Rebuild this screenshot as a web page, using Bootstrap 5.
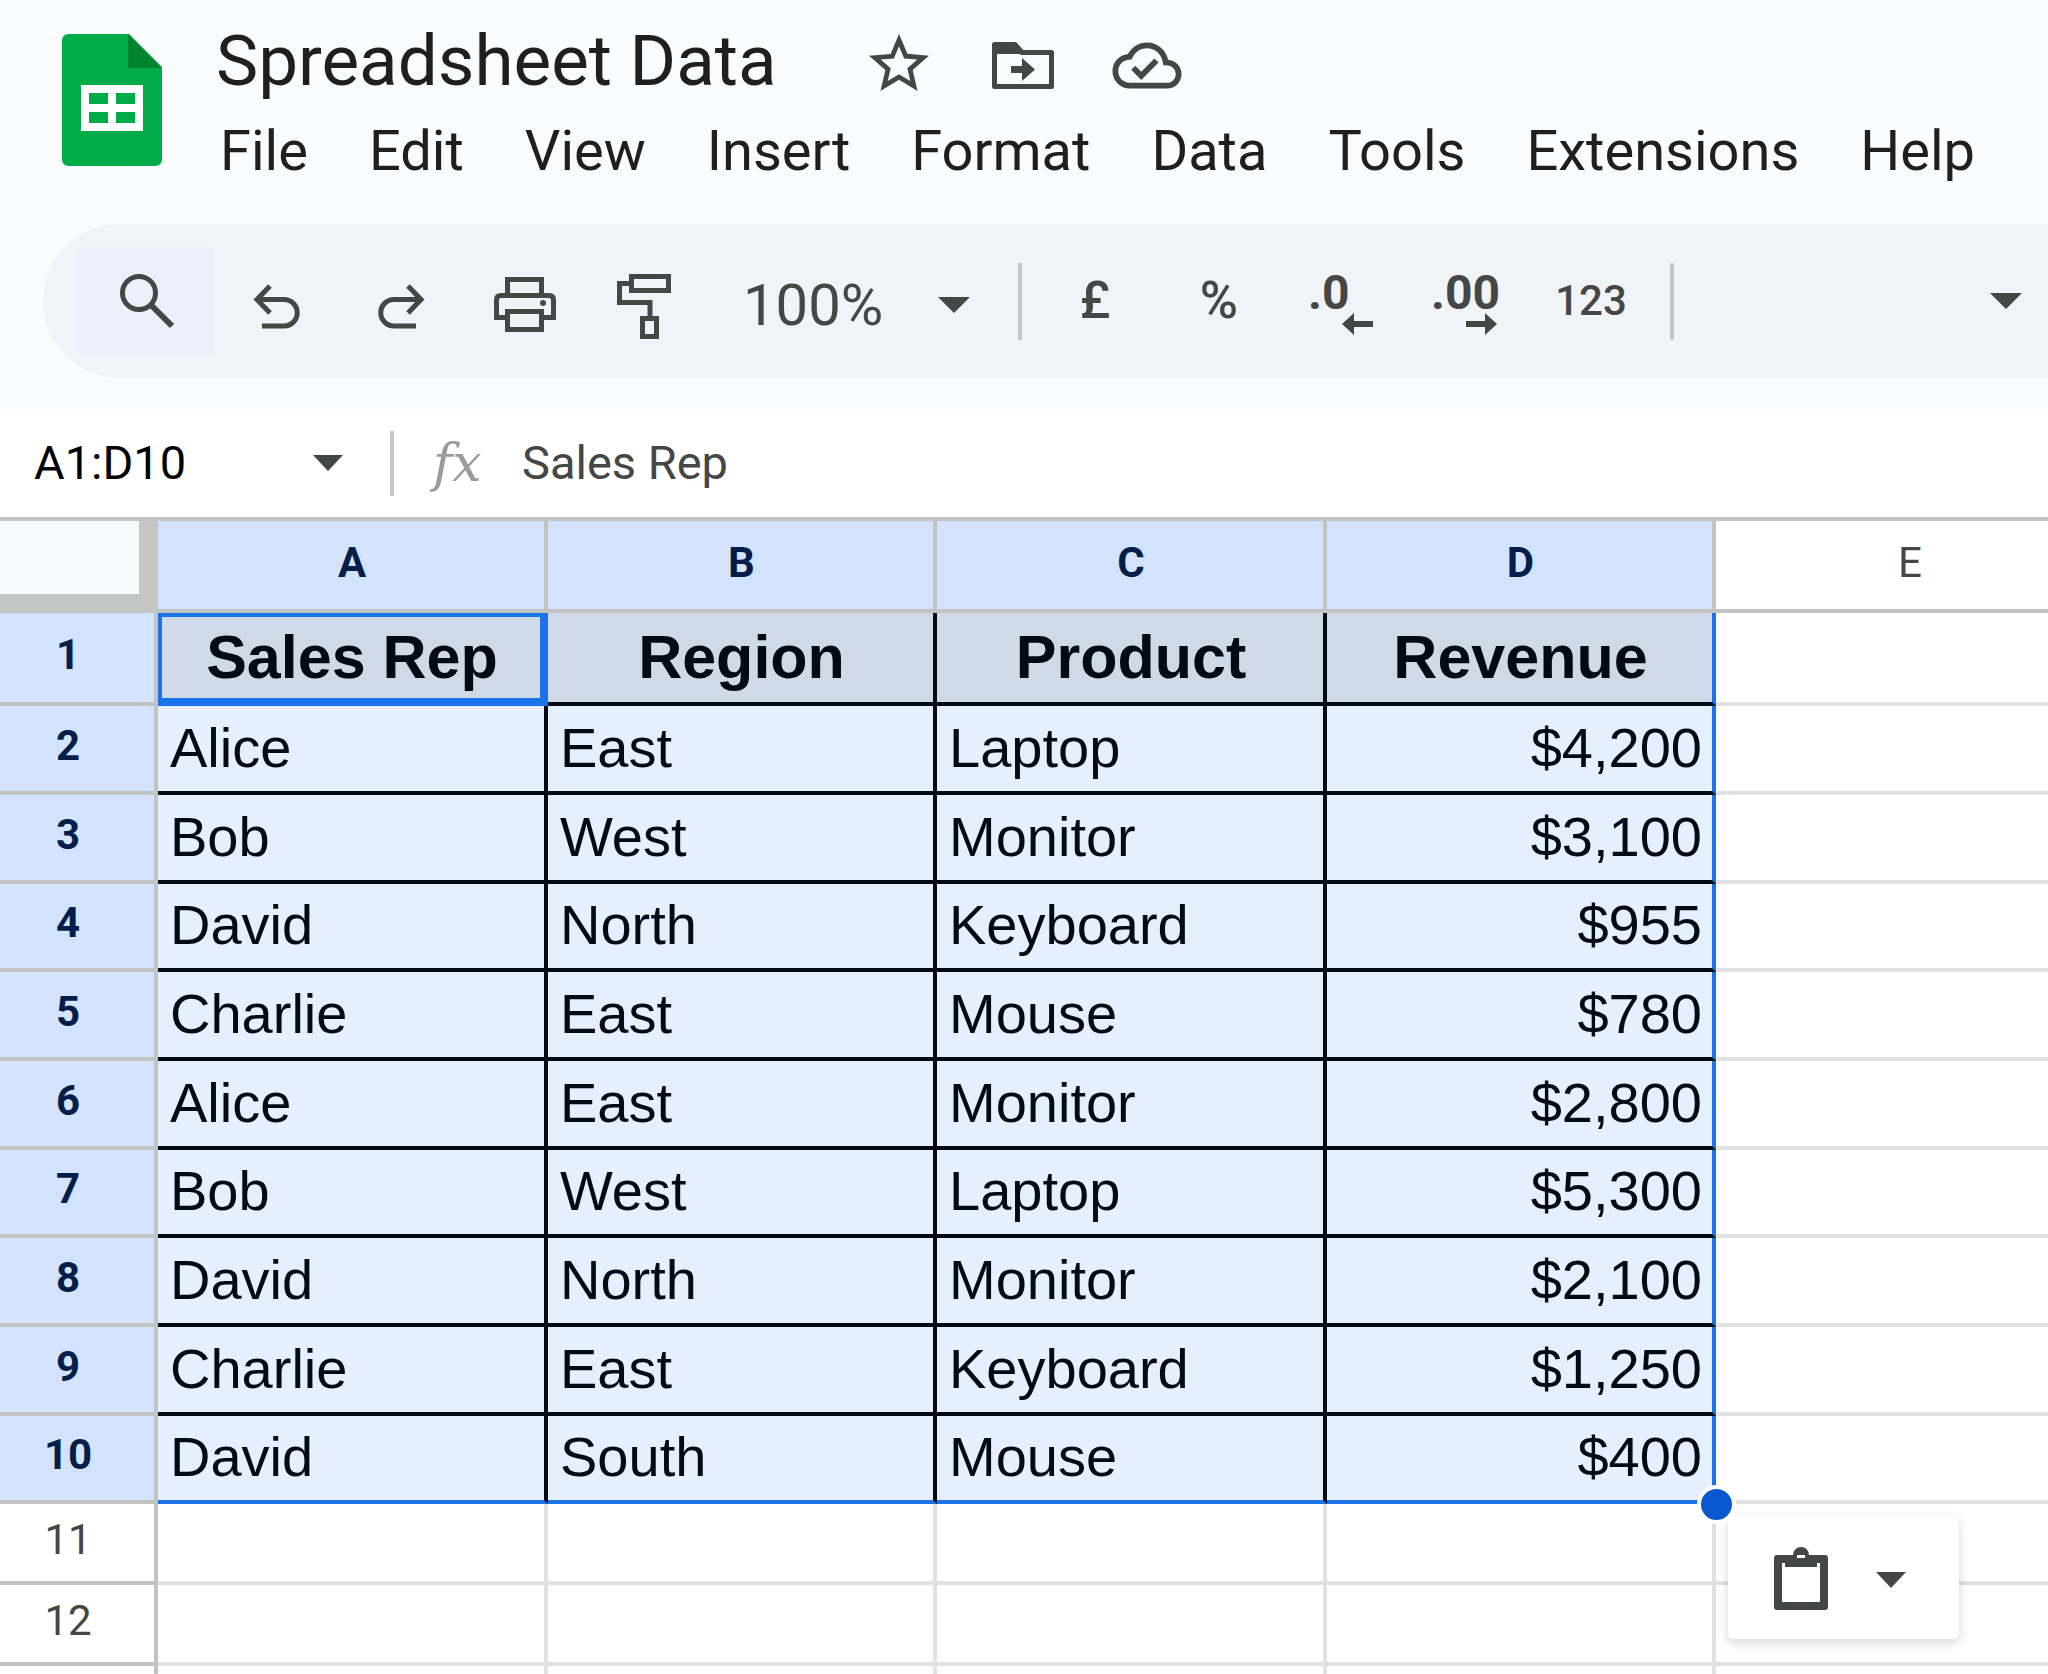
<!DOCTYPE html>
<html lang="en">
<head>
<meta charset="utf-8">
<meta name="viewport" content="width=device-width, initial-scale=1">
<title>Spreadsheet Data</title>
<link href="https://cdn.jsdelivr.net/npm/bootstrap@5.3.0/dist/css/bootstrap.min.css" rel="stylesheet">
<style>
  :root { --ink: #444746; --line: #c2c4c3; --grid: #e1e1e1; --pick: #1a73e8; --dark: #020a18; }
  body { background: #fafbfd; color: #1f1f1f; font-family: Roboto, "Liberation Sans", sans-serif; }
  svg { display: block; flex: none; }
  .ink-fill { fill: var(--ink); }
  .ink-line { fill: none; stroke: var(--ink); stroke-width: 5; }

  .app-head { padding: 21px 0 38px 62px; }
  .app-logo { margin: 13px 54px 0 0; }
  .doc-title { font-size: 71px; line-height: 80px; font-weight: 400; margin: 0 60px 0 0; }
  .icon-btn { width: 124px; padding: 0; border: 0; background: none; color: var(--ink); line-height: 1; display: flex; align-items: center; justify-content: center; flex: none; }
  .menu-row { margin: 15px 0 0 4px; gap: 61px; }
  .menu-row a { font-size: 56px; line-height: 70px; color: #1f1f1f; padding: 0; }

  .tool-strip { height: 154px; margin: 0 0 31px 43px; padding-left: 33px; background: #f0f3f8; border-radius: 77px 0 0 77px; color: var(--ink); }
  .search-btn { width: 139px; height: 108px; background: #edf0fa; border-radius: 8px; }
  .bare { appearance: none; border: 0; background: none; padding: 0; outline: 0; color: inherit; }
  .zoom-box { padding-left: 32px; margin-right: 48px; }
  .zoom-pick { width: 195px; font-size: 58px; line-height: 64px; }
  .rule-v { width: 4px; height: 77px; background: #c7c7c7; flex: none; }
  .fmt-group { margin: 0 17px 0 11px; }
  .t-sym { font-size: 52px; font-weight: 500; }
  .t-num { font-size: 42px; font-weight: 500; }
  .font-pick { padding-right: 26px; }

  .fx-bar { height: 108px; background: #fff; }
  .name-box { width: 278px; margin-left: 34px; font-size: 47px; color: #000; }
  .fx-rule { height: 65px; margin: 0 39px 0 46px; }
  .fx-mark { width: 89px; font: italic 64px/64px "DejaVu Serif", serif; font-size: 52px; color: #9b9b9b; }
  .fx-input { font-size: 47px; color: var(--ink); }

  .sheet-wrap { background: #fff; border-top: 4px solid var(--line); min-height: 0; }
  .sheet { table-layout: fixed; width: 2106px; border-collapse: separate; border-spacing: 0; font-family: "Liberation Sans", Arial, sans-serif; }
  .c-head { width: 158px; }
  .c-odd { width: 390px; }
  .c-even { width: 389px; }
  .sheet th, .sheet td { height: 89px; padding: 0 10px 2px 12px; vertical-align: middle; line-height: 64px; font-size: 56px; color: var(--dark); border: 0 solid var(--grid); border-width: 0 4px 4px 0; white-space: nowrap; }
  .sheet thead th { height: 92px; padding-bottom: 4px; text-align: center; }
  .sheet thead th, .sheet tbody th { font-family: Roboto, sans-serif; font-size: 42px; line-height: 44px; font-weight: 400; color: var(--ink); border-color: var(--line); }
  .sheet tbody th { padding: 0 18px 6px 0; text-align: center; }
  .sheet thead th.corner { background: #f8f9fa; border-width: 0 19px 19px 0; border-color: #c3c6c4; }
  .sheet th.on { background: #d3e3fd; color: #041e49; font-weight: 700; }
  .sheet .sel td:not(:last-child) { background: #e6effd; border-color: var(--dark); }
  .sheet .sel td:nth-child(5) { border-right-color: var(--pick); text-align: right; }
  .sheet .sel-head td:not(:last-child) { background: #d0d9e7; font-size: 61px; font-weight: 700; text-align: center; }
  .sheet .sel-head td { height: 93px; }
  .sheet .sel-head td:nth-child(2) { border-color: var(--pick); box-shadow: inset 0 0 0 4px var(--pick); }
  .sheet .sel:nth-child(3n+1):not(.sel-head) > * { height: 88px; }
  .sheet .sel-last td:not(:last-child) { border-bottom-color: var(--pick); }
  .sheet .free > * { height: 81px; }
  .grip { position: absolute; right: -24px; bottom: -24px; width: 39px; height: 39px; border: 4px solid #fff; border-radius: 50%; background: #0b57d0; }
  .paste-btn { position: absolute; right: -247px; top: calc(100% + 16px); width: 231px; height: 123px; padding: 0 52px 0 44px; background: #fff; border: 0; border-radius: 6px; box-shadow: 0 4px 10px 1px rgba(60, 64, 67, .18); }
</style>
<script src="https://cdn.jsdelivr.net/npm/bootstrap@5.3.0/dist/js/bootstrap.bundle.min.js"></script>
</head>
<body class="d-flex flex-column vh-100 overflow-hidden">

<header class="app-head d-flex align-items-start">
  <svg class="app-logo" width="100" height="132" viewBox="0 0 100 132" role="img" aria-label="Sheets">
    <path d="M7 0H67L100 33V125q0 7-7 7H7q-7 0-7-7V7Q0 0 7 0z" fill="#00ac47"/>
    <path d="M66 0L100 34H66z" fill="#00832d"/>
    <path d="M19 51H81V97H19zM27 59V70H46V59zM54 59V70H73V59zM27 78V89H46V78zM54 78V89H73V78z" fill="#fff" fill-rule="evenodd"/>
  </svg>
  <div>
    <div class="d-flex align-items-center">
      <h1 class="doc-title">Spreadsheet Data</h1>
      <button class="icon-btn" type="button" aria-label="Star">
        <svg width="72" height="72" viewBox="0 0 72 72"><path class="ink-fill" transform="translate(0 3) scale(3)" d="M22 9.24l-7.19-.62L12 2 9.19 8.63 2 9.24l5.46 4.73L5.82 21 12 17.27 18.18 21l-1.63-7.03L22 9.24zM12 15.4l-3.76 2.27 1-4.28-3.32-2.88 4.38-.38L12 6.1l1.71 4.04 4.38.38-3.32 2.88 1 4.28L12 15.4z"/></svg>
      </button>
      <button class="icon-btn" type="button" aria-label="Move">
        <svg width="72" height="72" viewBox="0 0 72 72"><path class="ink-line" stroke-linejoin="round" d="M7.5 27.500V19.500H28l7 8H64.500V61.500H7.500z"/><path class="ink-fill" d="M7 19H28l7 10H7zM24 41H35V33L48 44.500 35 56V48H24z"/></svg>
      </button>
      <button class="icon-btn" type="button" aria-label="Saved to Drive">
        <svg width="72" height="72" viewBox="0 0 72 72"><path class="ink-fill" transform="translate(1.500 6) scale(2.875)" d="M19.350 10.040C18.670 6.590 15.640 4 12 4 9.110 4 6.600 5.640 5.350 8.040 2.340 8.360 0 10.910 0 14c0 3.310 2.690 6 6 6h13c2.760 0 5-2.240 5-5 0-2.640-2.050-4.780-4.650-4.960zM19 18H6c-2.210 0-4-1.790-4-4 0-2.050 1.530-3.760 3.560-3.970l1.070-.11.5-.95C8.080 7.140 9.940 6 12 6c2.620 0 4.880 1.860 5.390 4.430l.3 1.500 1.530.11c1.560.1 2.780 1.410 2.780 2.960 0 1.650-1.350 3-3 3zm-9-3.820l-2.090-2.090L6.500 13.500 10 17l6.010-6.010-1.410-1.410z"/></svg>
      </button>
    </div>
    <nav class="menu-row nav flex-nowrap" aria-label="Menu">
      <a class="nav-link" href="#">File</a>
      <a class="nav-link" href="#">Edit</a>
      <a class="nav-link" href="#">View</a>
      <a class="nav-link" href="#">Insert</a>
      <a class="nav-link" href="#">Format</a>
      <a class="nav-link" href="#">Data</a>
      <a class="nav-link" href="#">Tools</a>
      <a class="nav-link" href="#">Extensions</a>
      <a class="nav-link" href="#">Help</a>
    </nav>
  </div>
</header>

<div class="tool-strip d-flex align-items-center flex-shrink-0" role="toolbar" aria-label="Toolbar">
  <button class="icon-btn search-btn" type="button" aria-label="Search the menus">
    <svg width="72" height="80" viewBox="0 0 72 80"><g class="ink-line"><circle cx="29" cy="32" r="16.500"/><path d="M41 44L62 65" stroke-width="6"/></g></svg>
  </button>
  <button class="icon-btn" type="button" aria-label="Undo">
    <svg width="72" height="80" viewBox="0 0 72 80"><path class="ink-line" d="M29 25L16 38.500 29 52M16 38.500H43a13.200 13.200 0 0 1 0 26.500H21"/></svg>
  </button>
  <button class="icon-btn" type="button" aria-label="Redo">
    <svg width="72" height="80" viewBox="0 0 72 80"><path class="ink-line" d="M43 25L56 38.500 43 52M56 38.500H29a13.200 13.200 0 0 0 0 26.500H51"/></svg>
  </button>
  <button class="icon-btn" type="button" aria-label="Print">
    <svg width="72" height="80" viewBox="0 0 72 80"><path class="ink-line" d="M18.500 34V18.500H52.500V34M18 56.500H7.500V39q0-4.500 4.500-4.500H60q4.500 0 4.500 4.500V56.500H53M18.500 50.500H52.500V68.500H18.500z"/><circle class="ink-fill" cx="54" cy="42" r="3"/></svg>
  </button>
  <button class="icon-btn" type="button" aria-label="Paint format">
    <svg width="72" height="80" viewBox="0 0 72 80"><path class="ink-line" d="M18.500 15.500H55.500V29.500H18.500zM18 22.500H6.500V41.500H37V56M29.500 57.500H43.500V75.500H29.500z"/></svg>
  </button>
  <div class="zoom-box d-flex align-items-center pt-2">
    <select class="bare zoom-pick" aria-label="Zoom"><option>100%</option></select>
    <svg width="32" height="16" viewBox="0 0 32 16"><path class="ink-fill" d="M0 0H32L16 16z"/></svg>
  </div>
  <span class="rule-v"></span>
  <div class="fmt-group d-flex align-items-center">
    <button class="icon-btn t-sym" type="button" aria-label="Format as currency">£</button>
    <button class="icon-btn t-sym" type="button" aria-label="Format as percent">%</button>
    <button class="icon-btn" type="button" aria-label="Decrease decimal places">
      <svg width="72" height="80" viewBox="0 0 72 80"><text class="ink-fill" x="1" y="48" font-size="48" font-weight="700">.0</text><path class="ink-fill" d="M35 63L47 52V60H66V66H47V74z"/></svg>
    </button>
    <button class="icon-btn" type="button" aria-label="Increase decimal places">
      <svg width="72" height="80" viewBox="0 0 72 80"><text class="ink-fill" x="0" y="48" font-size="48" font-weight="700">.00</text><path class="ink-fill" d="M66 63L54 52V60H35V66H54V74z"/></svg>
    </button>
    <button class="icon-btn t-num" type="button" aria-label="More formats">123</button>
  </div>
  <span class="rule-v"></span>
  <button class="bare font-pick ms-auto" type="button" aria-label="Font">
    <svg width="32" height="16" viewBox="0 0 32 16"><path class="ink-fill" d="M0 0H32L16 16z"/></svg>
  </button>
</div>

<div class="fx-bar d-flex align-items-center flex-shrink-0">
  <input class="bare name-box" type="text" value="A1:D10" aria-label="Name box">
  <button class="bare" type="button" aria-label="Named ranges">
    <svg width="32" height="16" viewBox="0 0 32 16"><path class="ink-fill" d="M1 0H31L16 16z"/></svg>
  </button>
  <span class="rule-v fx-rule"></span>
  <label class="fx-mark" for="formula">fx</label>
  <input class="bare fx-input flex-grow-1" id="formula" type="text" value="Sales Rep">
</div>

<main class="sheet-wrap flex-grow-1 overflow-hidden">
  <table class="sheet">
    <colgroup><col class="c-head"><col class="c-odd"><col class="c-even"><col class="c-odd"><col class="c-even"><col class="c-odd"></colgroup>
    <thead>
      <tr><th class="corner"></th><th class="on">A</th><th class="on">B</th><th class="on">C</th><th class="on">D</th><th>E</th></tr>
    </thead>
    <tbody>
      <tr class="sel sel-head"><th class="on">1</th><td>Sales Rep</td><td>Region</td><td>Product</td><td>Revenue</td><td></td></tr>
      <tr class="sel"><th class="on">2</th><td>Alice</td><td>East</td><td>Laptop</td><td>$4,200</td><td></td></tr>
      <tr class="sel"><th class="on">3</th><td>Bob</td><td>West</td><td>Monitor</td><td>$3,100</td><td></td></tr>
      <tr class="sel"><th class="on">4</th><td>David</td><td>North</td><td>Keyboard</td><td>$955</td><td></td></tr>
      <tr class="sel"><th class="on">5</th><td>Charlie</td><td>East</td><td>Mouse</td><td>$780</td><td></td></tr>
      <tr class="sel"><th class="on">6</th><td>Alice</td><td>East</td><td>Monitor</td><td>$2,800</td><td></td></tr>
      <tr class="sel"><th class="on">7</th><td>Bob</td><td>West</td><td>Laptop</td><td>$5,300</td><td></td></tr>
      <tr class="sel"><th class="on">8</th><td>David</td><td>North</td><td>Monitor</td><td>$2,100</td><td></td></tr>
      <tr class="sel"><th class="on">9</th><td>Charlie</td><td>East</td><td>Keyboard</td><td>$1,250</td><td></td></tr>
      <tr class="sel sel-last"><th class="on">10</th><td>David</td><td>South</td><td>Mouse</td>
        <td class="position-relative">$400
          <button class="paste-btn d-flex align-items-center justify-content-between" type="button" aria-label="Paste options">
            <svg width="58" height="64" viewBox="0 0 58 64"><path class="ink-fill" fill-rule="evenodd" d="M5 9H21Q22 1 29 1T37 9H53q3 0 3 3V61q0 3-3 3H5q-3 0-3-3V12Q2 9 5 9zM10 17V56H48V17H45V21H13V17zM25 9V12H33V9z"/></svg>
            <svg width="32" height="20" viewBox="0 0 32 20"><path class="ink-fill" d="M1 4H31L16 20z"/></svg>
          </button>
          <span class="grip"></span>
        </td><td></td></tr>
      <tr class="free"><th>11</th><td></td><td></td><td></td><td></td><td></td></tr>
      <tr class="free"><th>12</th><td></td><td></td><td></td><td></td><td></td></tr>
      <tr class="free"><th></th><td></td><td></td><td></td><td></td><td></td></tr>
    </tbody>
  </table>
</main>
</body>
</html>
